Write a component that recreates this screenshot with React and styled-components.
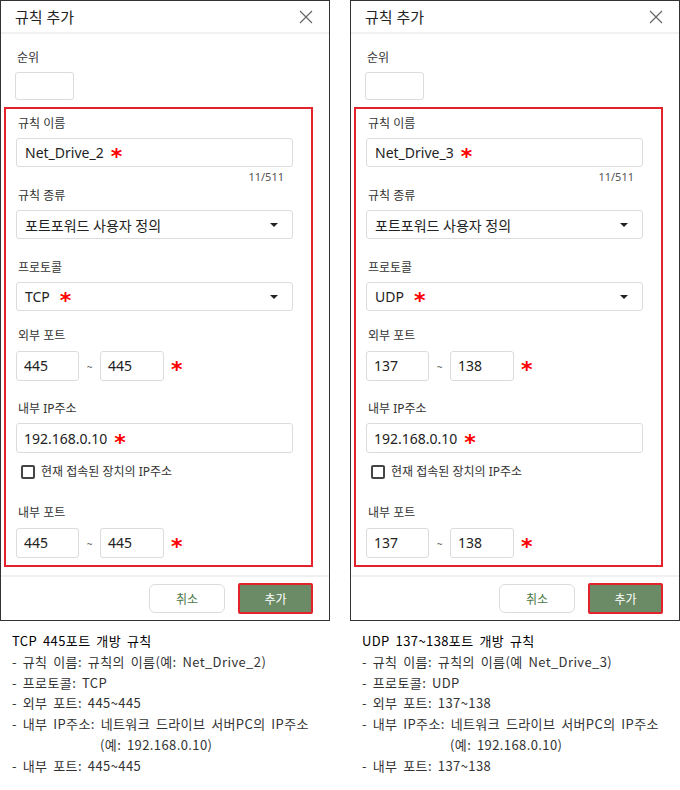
import styled, { createGlobalStyle } from 'styled-components';

const GlobalStyle = createGlobalStyle`
  html, body {
    margin: 0;
    padding: 0;
    background: #fff;
  }
  body {
    font-family: "Noto Sans", "Noto Sans CJK KR", sans-serif;
    color: #222;
  }
  * {
    box-sizing: border-box;
  }
`;

const Page = styled.div`
  display: grid;
  grid-template-columns: 330px 330px;
  column-gap: 20px;
  align-items: start;
`;

const Column = styled.section`
  display: flex;
  flex-direction: column;
`;

const Dialog = styled.div`
  border: 1px solid #333;
  background: #fff;
  display: flex;
  flex-direction: column;
`;

const Header = styled.header`
  height: 33px;
  display: flex;
  align-items: center;
  justify-content: space-between;
  padding: 0 16px 0 14px;
  border-bottom: 2px solid #f1f1f1;
`;

const Title = styled.h2`
  margin: 0;
  font-size: 15px;
  font-weight: 400;
  color: #222;
`;

const CloseButton = styled.button`
  border: none;
  background: none;
  padding: 0;
  width: 15px;
  height: 15px;
  display: flex;
  align-items: center;
  justify-content: center;
  cursor: pointer;
`;

const Body = styled.div`
  padding: 16px 16px 0 3px;
  display: flex;
  flex-direction: column;
`;

const RankGroup = styled.div`
  padding-left: 11px;
  display: flex;
  flex-direction: column;
`;

const Highlight = styled.div`
  margin-top: 7px;
  border: 2px solid #e4222b;
  padding: 7px 18px 7px 10px;
  display: flex;
  flex-direction: column;
`;

const Field = styled.div`
  margin-top: ${(p) => p.$gap || 0}px;
  display: flex;
  flex-direction: column;
`;

const Label = styled.label`
  font-size: 12px;
  line-height: 16px;
  color: #333;
  padding-left: 2px;
  margin-bottom: 6px;
`;

const Box = styled.div`
  height: ${(p) => p.$h || 29}px;
  width: ${(p) => (p.$w ? `${p.$w}px` : '100%')};
  border: 1px solid #dcdcdc;
  border-radius: 3px;
  background: #fff;
  display: flex;
  align-items: center;
  gap: 7px;
  padding: 0 14px 0 ${(p) => p.$pl || 8}px;
  font-size: 14px;
  color: #222;
`;

const Value = styled.span`
  white-space: nowrap;
`;

const Star = styled.span`
  color: #ff0000;
  font-family: "DejaVu Sans", sans-serif;
  font-weight: 700;
  font-size: 22px;
  line-height: 1;
  padding-top: 9px;
`;

const Caret = styled.span`
  margin-left: auto;
  width: 0;
  height: 0;
  border-left: 4px solid transparent;
  border-right: 4px solid transparent;
  border-top: 4px solid #222;
`;

const Counter = styled.div`
  margin-top: 3px;
  text-align: right;
  padding-right: 9px;
  font-size: 11px;
  line-height: 14px;
  color: #555;
`;

const PortRow = styled.div`
  display: flex;
  align-items: center;
`;

const Tilde = styled.span`
  width: 21px;
  text-align: center;
  font-size: 10px;
  padding-top: 3px;
  color: #666;
`;

const CheckRow = styled.div`
  margin-top: 12px;
  padding-left: 5px;
  display: flex;
  align-items: center;
  gap: 6px;
  font-size: 12px;
  line-height: 14px;
  color: #333;
`;

const CheckBox = styled.span`
  width: 14px;
  height: 14px;
  border: 2px solid #444;
  border-radius: 2px;
  background: #fff;
`;

const Footer = styled.footer`
  margin-top: 8px;
  border-top: 2px solid #f1f1f1;
  padding: 6px 16px 6px 0;
  display: flex;
  justify-content: flex-end;
  align-items: center;
  gap: 13px;
`;

const Button = styled.button`
  font-family: inherit;
  font-size: 12px;
  cursor: pointer;
  ${(p) =>
    p.$primary
      ? `
    width: 75px;
    height: 31px;
    background: #6b8a66;
    color: #fff;
    border: 2px solid #e4222b;
    border-radius: 2px;
  `
      : `
    width: 76px;
    height: 29px;
    background: #fff;
    color: #4b7a45;
    border: 1px solid #dcdcdc;
    border-radius: 6px;
  `}
`;

const Notes = styled.div`
  margin-top: 10px;
  padding-left: 12px;
  font-family: "Noto Sans CJK KR", "Noto Sans", sans-serif;
  font-size: 13px;
  line-height: 20.8px;
  letter-spacing: 0.4px;
  word-spacing: 2.5px;
  color: #333;
`;

const NoteTitle = styled.div`
  color: #000;
  font-weight: 400;
`;

const NoteLine = styled.div`
  padding-left: ${(p) => p.$indent || 0}px;
  white-space: nowrap;
`;

function CloseIcon() {
  return (
    <svg width="14" height="14" viewBox="0 0 14 14">
      <path d="M1 1 L13 13 M13 1 L1 13" stroke="#666" strokeWidth="1.2" fill="none" />
    </svg>
  );
}

function PortInputs({ from, to }) {
  return (
    <PortRow>
      <Box $w={63} $h={30} $pl={7}>
        <Value>{from}</Value>
      </Box>
      <Tilde>~</Tilde>
      <Box $w={64} $h={30} $pl={7}>
        <Value>{to}</Value>
      </Box>
      <Star style={{ marginLeft: 7 }}>*</Star>
    </PortRow>
  );
}

function RuleDialog({ rule }) {
  return (
    <Dialog>
      <Header>
        <Title>규칙 추가</Title>
        <CloseButton aria-label="닫기">
          <CloseIcon />
        </CloseButton>
      </Header>
      <Body>
        <RankGroup>
          <Label>순위</Label>
          <Box $w={59} $h={28} />
        </RankGroup>
        <Highlight>
          <Field>
            <Label>규칙 이름</Label>
            <Box>
              <Value>{rule.name}</Value>
              <Star>*</Star>
            </Box>
            <Counter>11/511</Counter>
          </Field>
          <Field $gap={4}>
            <Label>규칙 종류</Label>
            <Box>
              <Value>포트포워드 사용자 정의</Value>
              <Caret />
            </Box>
          </Field>
          <Field $gap={21}>
            <Label>프로토콜</Label>
            <Box>
              <Value>{rule.protocol}</Value>
              <Star style={{ marginLeft: 3 }}>*</Star>
              <Caret />
            </Box>
          </Field>
          <Field $gap={17}>
            <Label>외부 포트</Label>
            <PortInputs from={rule.ext[0]} to={rule.ext[1]} />
          </Field>
          <Field $gap={20}>
            <Label>내부 IP주소</Label>
            <Box $h={30} $pl={7}>
              <Value>192.168.0.10</Value>
              <Star>*</Star>
            </Box>
          </Field>
          <CheckRow>
            <CheckBox />
            <span>현재 접속된 장치의 IP주소</span>
          </CheckRow>
          <Field $gap={26}>
            <Label>내부 포트</Label>
            <PortInputs from={rule.int[0]} to={rule.int[1]} />
          </Field>
        </Highlight>
      </Body>
      <Footer>
        <Button>취소</Button>
        <Button $primary>추가</Button>
      </Footer>
    </Dialog>
  );
}

const rules = [
  {
    name: 'Net_Drive_2',
    protocol: 'TCP',
    ext: ['445', '445'],
    int: ['445', '445'],
    notes: [
      'TCP 445포트 개방 규칙',
      '- 규칙 이름: 규칙의 이름(예: Net_Drive_2)',
      '- 프로토콜: TCP',
      '- 외부 포트: 445~445',
      '- 내부 IP주소: 네트워크 드라이브 서버PC의 IP주소',
      '(예: 192.168.0.10)',
      '- 내부 포트: 445~445',
    ],
  },
  {
    name: 'Net_Drive_3',
    protocol: 'UDP',
    ext: ['137', '138'],
    int: ['137', '138'],
    notes: [
      'UDP 137~138포트 개방 규칙',
      '- 규칙 이름: 규칙의 이름(예 Net_Drive_3)',
      '- 프로토콜: UDP',
      '- 외부 포트: 137~138',
      '- 내부 IP주소: 네트워크 드라이브 서버PC의 IP주소',
      '(예: 192.168.0.10)',
      '- 내부 포트: 137~138',
    ],
  },
];

export default function App() {
  return (
    <>
      <GlobalStyle />
      <Page>
        {rules.map((rule) => (
          <Column key={rule.name}>
            <RuleDialog rule={rule} />
            <Notes>
              <NoteTitle>{rule.notes[0]}</NoteTitle>
              {rule.notes.slice(1).map((line, idx) => (
                <NoteLine key={idx} $indent={line.startsWith('(') ? 88 : 0}>
                  {line}
                </NoteLine>
              ))}
            </Notes>
          </Column>
        ))}
      </Page>
    </>
  );
}
